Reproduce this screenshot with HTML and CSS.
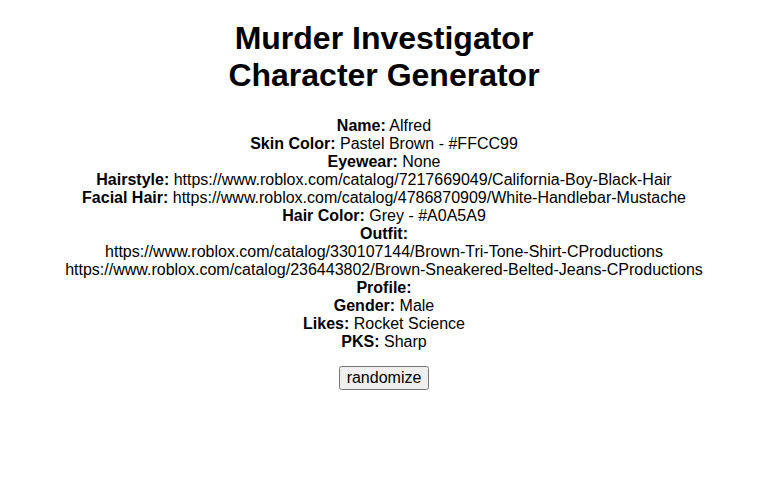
FILE: index.html
```html
<!DOCTYPE html>
<html lang="en">
<head>
    <meta charset="UTF-8">
    <meta name="viewport" content="width=device-width, initial-scale=1.0">
    <title>Murder Investigator Character Generator</title>
    <link rel="stylesheet" href="styles.css">
</head>
<body>
    <h1 class="title">Murder Investigator<br>Character Generator</h1>
    <div class="character">
        <div><b>Name:</b> Alfred</div>
        <div><b>Skin Color:</b> Pastel Brown - #FFCC99</div>
        <div><b>Eyewear:</b> None</div>
        <div><b>Hairstyle:</b> https://www.roblox.com/catalog/7217669049/California-Boy-Black-Hair</div>
        <div><b>Facial Hair:</b> https://www.roblox.com/catalog/4786870909/White-Handlebar-Mustache</div>
        <div><b>Hair Color:</b> Grey - #A0A5A9</div>
        <div><b>Outfit:</b></div>
        <div>https://www.roblox.com/catalog/330107144/Brown-Tri-Tone-Shirt-CProductions</div>
        <div>https://www.roblox.com/catalog/236443802/Brown-Sneakered-Belted-Jeans-CProductions</div>
        <div><b>Profile:</b></div>
        <div><b>Gender:</b> Male</div>
        <div><b>Likes:</b> Rocket Science</div>
        <div><b>PKS:</b> Sharp</div>
    </div>
    <button class="randomize" onclick="location.reload()">randomize</button>
</body>
</html>
```

FILE: styles.css
```css
body {
    font-family: "Liberation Sans", Arial, sans-serif;
    font-size: 16px;
    margin: 0;
    text-align: center;
    color: #000;
    background-color: #fff;
}
.title {
    font-size: 32px;
    margin: 20px 0 23px;
}
.character {
    line-height: 18px;
}
.randomize {
    font-family: "Liberation Sans", Arial, sans-serif;
    font-size: 16px;
    margin-top: 15px;
    padding: 1px 6px;
}
```
